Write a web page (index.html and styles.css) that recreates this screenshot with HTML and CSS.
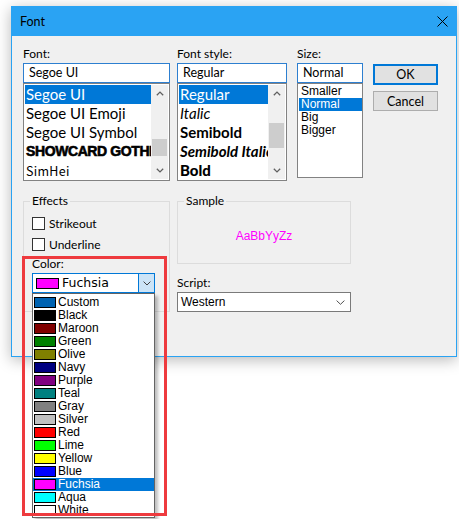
FILE: index.html
```html
<!DOCTYPE html>
<html>
<head>
<meta charset="utf-8">
<title>Font</title>
<link rel="stylesheet" href="styles.css">
</head>
<body>
<div class="dialog">
  <div class="titlebar">
    <span class="title">Font</span>
    <svg class="close" width="11" height="11" viewBox="0 0 11 11"><path d="M0.5 0.5L10.5 10.5M10.5 0.5L0.5 10.5" stroke="#000" stroke-width="1" fill="none"/></svg>
  </div>
  <div class="content">
    <div class="top">
      <div class="col col-font">
        <div class="label">Font:</div>
        <div class="edit">Segoe UI</div>
        <div class="list">
          <div class="items">
            <div class="item sel">Segoe UI</div>
            <div class="item">Segoe UI Emoji</div>
            <div class="item">Segoe UI Symbol</div>
            <div class="item showcard">SHOWCARD GOTHIC</div>
            <div class="item simhei">SimHei</div>
          </div>
          <div class="scrollbar">
            <div class="sb-btn"><svg width="8" height="5" viewBox="0 0 8 5"><path d="M0.8 4.3L4 1.1L7.2 4.3" stroke="#606060" stroke-width="1.3" fill="none"/></svg></div>
            <div class="sb-track"><div class="thumb thumb-font"></div></div>
            <div class="sb-btn"><svg width="8" height="5" viewBox="0 0 8 5"><path d="M0.8 0.7L4 3.9L7.2 0.7" stroke="#606060" stroke-width="1.3" fill="none"/></svg></div>
          </div>
        </div>
      </div>
      <div class="col col-style">
        <div class="label">Font style:</div>
        <div class="edit">Regular</div>
        <div class="list">
          <div class="items">
            <div class="item sel">Regular</div>
            <div class="item italic">Italic</div>
            <div class="item semibold">Semibold</div>
            <div class="item semibold italic">Semibold Italic</div>
            <div class="item bold">Bold</div>
          </div>
          <div class="scrollbar">
            <div class="sb-btn"><svg width="8" height="5" viewBox="0 0 8 5"><path d="M0.8 4.3L4 1.1L7.2 4.3" stroke="#606060" stroke-width="1.3" fill="none"/></svg></div>
            <div class="sb-track"><div class="thumb thumb-style"></div></div>
            <div class="sb-btn"><svg width="8" height="5" viewBox="0 0 8 5"><path d="M0.8 0.7L4 3.9L7.2 0.7" stroke="#606060" stroke-width="1.3" fill="none"/></svg></div>
          </div>
        </div>
      </div>
      <div class="col col-size">
        <div class="label">Size:</div>
        <div class="edit">Normal</div>
        <div class="size-list">
          <div class="size-item">Smaller</div>
          <div class="size-item sel">Normal</div>
          <div class="size-item">Big</div>
          <div class="size-item">Bigger</div>
        </div>
      </div>
      <div class="col buttons">
        <div class="btn btn-default">OK</div>
        <div class="btn btn-cancel">Cancel</div>
      </div>
    </div>
    <div class="lower">
      <fieldset class="group effects">
        <legend>Effects</legend>
        <div class="check"><span class="box"></span><span>Strikeout</span></div>
        <div class="check"><span class="box"></span><span>Underline</span></div>
        <div class="color-label">Color:</div>
        <div class="combo">
          <span class="swatch-lg"></span>
          <span class="combo-text">Fuchsia</span>
          <span class="combo-btn"><svg width="8" height="5" viewBox="0 0 8 5"><path d="M0.6 0.6L4 4L7.4 0.6" stroke="#404040" stroke-width="1" fill="none"/></svg></span>
          <div class="dropdown">
            <div class="opt"><span class="sw c-custom"></span>Custom</div>
            <div class="opt"><span class="sw c-black"></span>Black</div>
            <div class="opt"><span class="sw c-maroon"></span>Maroon</div>
            <div class="opt"><span class="sw c-green"></span>Green</div>
            <div class="opt"><span class="sw c-olive"></span>Olive</div>
            <div class="opt"><span class="sw c-navy"></span>Navy</div>
            <div class="opt"><span class="sw c-purple"></span>Purple</div>
            <div class="opt"><span class="sw c-teal"></span>Teal</div>
            <div class="opt"><span class="sw c-gray"></span>Gray</div>
            <div class="opt"><span class="sw c-silver"></span>Silver</div>
            <div class="opt"><span class="sw c-red"></span>Red</div>
            <div class="opt"><span class="sw c-lime"></span>Lime</div>
            <div class="opt"><span class="sw c-yellow"></span>Yellow</div>
            <div class="opt"><span class="sw c-blue"></span>Blue</div>
            <div class="opt opt-sel"><span class="sw c-fuchsia"></span>Fuchsia</div>
            <div class="opt"><span class="sw c-aqua"></span>Aqua</div>
            <div class="opt"><span class="sw c-white"></span>White</div>
          </div>
        </div>
      </fieldset>
      <div class="right">
        <fieldset class="group sample">
          <legend>Sample</legend>
          <div class="sample-area">AaBbYyZz</div>
        </fieldset>
        <div class="script-label">Script:</div>
        <div class="script-combo">
          <span class="script-text">Western</span>
          <svg width="9" height="5" viewBox="0 0 9 5"><path d="M0.6 0.6L4.5 4.3L8.4 0.6" stroke="#505050" stroke-width="1" fill="none"/></svg>
        </div>
      </div>
    </div>
  </div>
</div>
<div class="annotation"></div>
</body>
</html>
```
FILE: styles.css
```css
* { box-sizing: border-box; }
html, body { margin: 0; padding: 0; }
body {
  width: 459px;
  height: 519px;
  overflow: hidden;
  background: #ffffff;
  font-family: Lato, "Open Sans", sans-serif;
  font-size: 12px;
  color: #000;
  position: relative;
}
.dialog {
  margin: 6px 0 0 11px;
  width: 446px;
  height: 351px;
  border: 1px solid #2aa3f3;
  background: #f0f0f0;
  box-shadow: 0 3px 14px rgba(0, 0, 0, 0.28);
}
.titlebar {
  height: 29px;
  background: #2aa3f3;
  display: flex;
  align-items: center;
  justify-content: space-between;
  padding: 0 8px 0 8px;
}
.title { font-size: 12.5px; line-height: 29px; }
.close { display: block; }
.content { padding: 10px 0 0 11px; }
.top { display: flex; align-items: flex-start; }
.col { display: flex; flex-direction: column; }
.col-font { width: 147px; margin-right: 7px; }
.col-style { width: 110px; margin-right: 10px; }
.col-size { width: 66px; margin-right: 10px; }
.label { height: 15px; line-height: 15px; margin-bottom: 2px; white-space: nowrap; }
.edit {
  height: 20px;
  border: 1px solid #2d7fd0;
  background: #fff;
  padding: 0 5px;
  font-size: 12.5px;
  line-height: 18px;
  white-space: nowrap;
  overflow: hidden;
}
.list {
  height: 98px;
  border: 1px solid #828282;
  background: #fff;
  padding: 1px;
  display: flex;
  overflow: hidden;
}
.items { flex: 1; min-width: 0; overflow: hidden; }
.item {
  height: 19px;
  line-height: 19px;
  font-size: 15px;
  padding-left: 1px;
  white-space: nowrap;
  overflow: hidden;
}
.sel { background: #0078d7; color: #fff; }
.italic { font-style: italic; }
.semibold { font-weight: 700; }
.bold { font-weight: 900; }
.showcard {
  font-family: "Liberation Sans", sans-serif;
  font-weight: 700;
  font-size: 14px;
  letter-spacing: -0.4px;
  -webkit-text-stroke: 0.6px #000;
}
.simhei { font-family: "Noto Sans CJK SC", sans-serif; font-size: 12.5px; letter-spacing: 0.3px; }
.scrollbar { width: 17px; flex: none; background: #f0f0f0; display: flex; flex-direction: column; }
.sb-btn { height: 17px; flex: none; display: flex; align-items: center; justify-content: center; }
.sb-btn svg { display: block; }
.sb-track { flex: 1; }
.thumb { margin: 0 1px; background: #cdcdcd; }
.thumb-font { margin-top: 37px; height: 17px; }
.thumb-style { margin-top: 21px; height: 25px; }
.size-list {
  height: 95px;
  border: 1px solid #828282;
  background: #fff;
  padding: 1px 0 1px 1px;
}
.size-item, .opt, .sample-area, .script-text {
  font-family: "Liberation Sans Narrow", "Arial Narrow", "Liberation Sans", sans-serif;
  font-size: 12px;
}
.size-item { height: 13px; line-height: 13px; padding-left: 2px; }
.buttons { width: 65px; margin-top: 18px; gap: 6px; }
.btn {
  display: flex;
  align-items: center;
  justify-content: center;
  background: #e1e1e1;
  border: 1px solid #adadad;
  font-size: 12.5px;
}
.btn-default { height: 21px; border: 2px solid #0078d7; }
.btn-cancel { height: 20px; }
.lower { display: flex; gap: 7px; margin-top: 12px; }
.group {
  margin: 0;
  min-width: 0;
  border: 1px solid #dcdcdc;
}
.group legend { padding: 0 2px; margin-left: -2px; line-height: 16px; font-size: 12px; }
.effects { width: 147px; padding: 4px 14px 16px 8px; }
.check { height: 21px; display: flex; align-items: center; gap: 4px; }
.box { width: 13px; height: 13px; border: 1px solid #333; background: #fff; flex: none; }
.color-label { line-height: 15px; height: 15px; margin-top: 1px; margin-bottom: 2px; }
.combo {
  position: relative;
  width: 123px;
  height: 20px;
  border: 1px solid #0078d7;
  background: #fff;
  display: flex;
  align-items: center;
}
.swatch-lg { width: 23px; height: 11px; border: 1px solid #000; background: #ff00ff; margin-left: 3px; flex: none; }
.combo-text { margin-left: 3px; font-family: "DejaVu Sans", sans-serif; font-size: 12.5px; line-height: 18px; }
.combo-btn {
  margin-left: auto;
  width: 16px;
  height: 100%;
  background: #cce4f7;
  border-left: 1px solid #0078d7;
  display: flex;
  align-items: center;
  justify-content: center;
}
.combo-btn svg { display: block; }
.dropdown {
  position: absolute;
  left: -1px;
  top: 19px;
  width: 123px;
  border: 1px solid #646464;
  background: #fff;
  padding: 2px 0 0 0;
  box-shadow: 3px 3px 3px rgba(0, 0, 0, 0.25);
  z-index: 5;
}
.opt { height: 13px; line-height: 13px; display: flex; align-items: center; white-space: nowrap; }
.opt-sel { background: #0078d7; color: #fff; }
.sw { width: 22px; height: 11px; border: 1px solid #000; margin-left: 1px; margin-right: 2px; flex: none; }
.c-custom { background: #0063b1; }
.c-black { background: #000000; }
.c-maroon { background: #800000; }
.c-green { background: #008000; }
.c-olive { background: #808000; }
.c-navy { background: #000080; }
.c-purple { background: #800080; }
.c-teal { background: #008080; }
.c-gray { background: #808080; }
.c-silver { background: #c0c0c0; }
.c-red { background: #ff0000; }
.c-lime { background: #00ff00; }
.c-yellow { background: #ffff00; }
.c-blue { background: #0000ff; }
.c-fuchsia { background: #ff00ff; }
.c-aqua { background: #00ffff; }
.c-white { background: #ffffff; }
.right { width: 174px; display: flex; flex-direction: column; }
.sample { width: 174px; padding: 0 8px; }
.sample-area { height: 54px; display: flex; align-items: center; justify-content: center; color: #ff00ff; }
.script-label { margin-top: 11px; height: 15px; line-height: 15px; margin-bottom: 2px; }
.script-combo {
  height: 20px;
  border: 1px solid #7a7a7a;
  background: #fff;
  display: flex;
  align-items: center;
  justify-content: space-between;
  padding: 0 5px 0 3px;
}
.script-combo svg { display: block; }
.annotation {
  position: absolute;
  left: 22px;
  top: 256px;
  width: 145px;
  height: 260px;
  border: 3px solid #ee3a3e;
  z-index: 10;
  pointer-events: none;
}
```
